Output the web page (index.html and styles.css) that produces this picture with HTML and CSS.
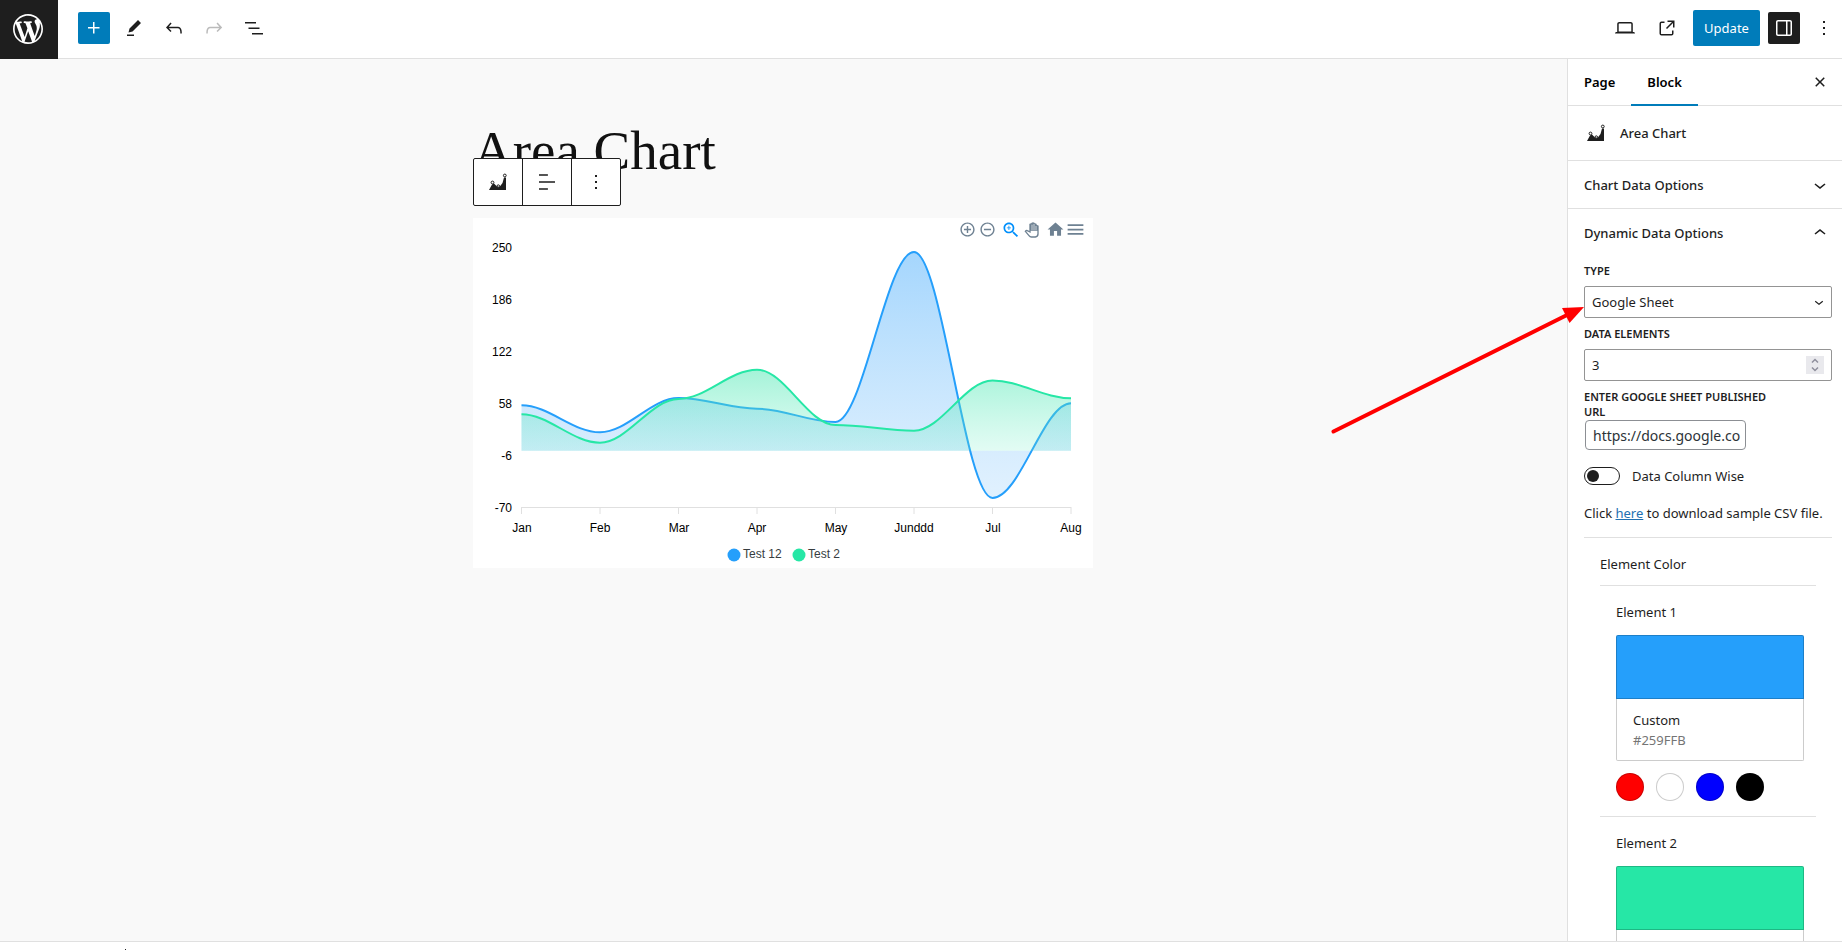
FILE: index.html
```
<!DOCTYPE html>
<html lang="en">

<head>
    <meta charset="UTF-8">
    <meta name="viewport" content="width=device-width, initial-scale=1.0">
    <title>Edit Page - Area Chart</title>
    <link rel="stylesheet" href="styles.css">
</head>

<body>
    <header class="editor-header">
        <a href="#" class="site-logo" aria-label="View Pages">
            <svg viewBox="-2 -2 24 24" width="36" height="36"><path d="M20 10c0-5.51-4.49-10-10-10C4.48 0 0 4.49 0 10c0 5.52 4.48 10 10 10 5.51 0 10-4.48 10-10zM7.78 15.37L4.37 6.22c.55-.02 1.17-.08 1.17-.08.5-.06.44-1.13-.06-1.11 0 0-1.45.11-2.37.11-.18 0-.37 0-.58-.01C4.12 2.69 6.87 1.11 10 1.11c2.33 0 4.45.87 6.05 2.34-.68-.11-1.65.39-1.65 1.58 0 .74.45 1.36.9 2.1.35.61.55 1.36.55 2.46 0 1.49-1.4 5-1.4 5l-3.03-8.37c.54-.02.82-.17.82-.17.5-.05.44-1.25-.06-1.22 0 0-1.44.12-2.38.12-.87 0-2.33-.12-2.33-.12-.5-.03-.56 1.2-.06 1.22l.92.08 1.26 3.41zM17.41 10c.24-.64.74-1.87.43-4.25.7 1.29 1.05 2.71 1.05 4.25 0 3.29-1.73 6.24-4.4 7.78.97-2.59 1.94-5.2 2.92-7.78zM6.1 18.09C3.12 16.65 1.11 13.53 1.11 10c0-1.3.23-2.48.72-3.59C3.25 10.3 4.67 14.2 6.1 18.09zm4.03-6.63l2.58 6.98c-.86.29-1.76.45-2.71.45-.79 0-1.57-.11-2.29-.33.81-2.38 1.62-4.74 2.42-7.1z"/></svg>
        </a>
        <div class="header-tools">
            <button class="icon-btn primary" aria-label="Add block">
                <svg viewBox="0 0 24 24" width="24" height="24"><path d="M11 12.5V17.5H12.5V12.5H17.5V11H12.5V6H11V11H6V12.5H11Z"/></svg>
            </button>
            <button class="icon-btn" aria-label="Tools">
                <svg viewBox="0 0 24 24" width="24" height="24"><path d="m19 7-3-3-8.5 8.5-1 4 4-1L19 7Zm-7 11.5H5V20h7v-1.5Z"/></svg>
            </button>
            <button class="icon-btn" aria-label="Undo">
                <svg viewBox="0 0 24 24" width="24" height="24"><path d="M18.3 11.7c-.6-.6-1.4-.9-2.3-.9H6.7l2.9-3.3-1.1-1-4.5 5L8.5 16l1-1-2.7-2.7H16c.5 0 .9.2 1.3.5 1 1 1 3.4 1 4.5v.3h1.5v-.2c0-1.5 0-4.3-1.5-5.7z"/></svg>
            </button>
            <button class="icon-btn" aria-label="Redo" disabled>
                <svg viewBox="0 0 24 24" width="24" height="24"><path d="M15.6 6.5l-1.1 1 2.9 3.3H8c-.9 0-1.7.3-2.3.9-1.4 1.5-1.4 4.2-1.4 5.6v.2h1.5v-.3c0-1.1 0-3.5 1-4.5.3-.3.7-.5 1.3-.5h9.2L14.5 15l1.1 1.1 4.6-4.6-4.6-5z"/></svg>
            </button>
            <button class="icon-btn" aria-label="Document overview">
                <svg viewBox="0 0 24 24" width="24" height="24"><path d="M3 6h11v1.5H3V6Zm3.5 5.5h11V13h-11v-1.5ZM21 17H10v1.5h11V17Z"/></svg>
            </button>
        </div>
        <div class="header-settings">
            <button class="icon-btn wide" aria-label="Preview">
                <svg viewBox="0 0 24 24" width="24" height="24"><path d="M20.5 16h-.7V8c0-1.1-.9-2-2-2H6.2c-1.1 0-2 .9-2 2v8h-.7c-.8 0-1.5.7-1.5 1.5h20c0-.8-.7-1.5-1.5-1.5zM5.7 8c0-.3.2-.5.5-.5h11.6c.3 0 .5.2.5.5v7.6H5.7V8z"/></svg>
            </button>
            <button class="icon-btn wide" aria-label="View page">
                <svg viewBox="0 0 24 24" width="24" height="24"><path d="M19.5 4.5h-7V6h4.44l-5.97 5.97 1.06 1.06L18 7.06v4.44h1.5v-7Zm-13 1a2 2 0 0 0-2 2v10a2 2 0 0 0 2 2h10a2 2 0 0 0 2-2v-3H17v3a.5.5 0 0 1-.5.5h-10a.5.5 0 0 1-.5-.5v-10a.5.5 0 0 1 .5-.5h3V5.5h-3Z"/></svg>
            </button>
            <button class="update-btn">Update</button>
            <button class="icon-btn pressed" aria-label="Settings">
                <svg viewBox="0 0 24 24" width="24" height="24"><path d="M18 4H6c-1.1 0-2 .9-2 2v12c0 1.1.9 2 2 2h12c1.1 0 2-.9 2-2V6c0-1.1-.9-2-2-2zm-4 14.5H6c-.3 0-.5-.2-.5-.5V6c0-.3.2-.5.5-.5h8v13zm4.5-.5c0 .3-.2.5-.5.5h-2.5v-13H18c.3 0 .5.2.5.5v12z"/></svg>
            </button>
            <button class="icon-btn" aria-label="Options">
                <svg viewBox="0 0 24 24" width="24" height="24"><path d="M13 19h-2v-2h2v2zm0-6h-2v-2h2v2zm0-6h-2V5h2v2z"/></svg>
            </button>
        </div>
    </header>

    <div class="editor-body">
        <main class="canvas">
            <div class="post">
                <h1 class="post-title">Area Chart</h1>

                <div class="chart-block">
                    <div class="block-toolbar">
                        <button aria-label="Area Chart">
                            <svg viewBox="0 0 24 24" width="24" height="24"><path d="M3 20 6 14.5 8 13.5 11.500 17 13.500 17 16.500 13 18 7.500 20 7.500V20Z"/><g class="dot"><circle cx="6.500" cy="12.500" r="1.400"/><circle cx="12.300" cy="16" r="1.200"/><circle cx="18.800" cy="5.500" r="1.400"/></g></svg>
                        </button>
                        <button aria-label="Align">
                            <svg viewBox="0 0 24 24" width="24" height="24"><path d="M4 19.800h8.900v-1.500H4v1.500zm8.900-15.600H4v1.500h8.900V4.200zm-8.900 7v1.500h16v-1.500H4z"/></svg>
                        </button>
                        <button aria-label="Options">
                            <svg viewBox="0 0 24 24" width="24" height="24"><path d="M13 19h-2v-2h2v2zm0-6h-2v-2h2v2zm0-6h-2V5h2v2z"/></svg>
                        </button>
                    </div>

                    <div class="chart-tools">
                        <button aria-label="Zoom in"><svg viewBox="0 0 24 24" width="17" height="17"><path d="M13 7h-2v4H7v2h4v4h2v-4h4v-2h-4V7zm-1-5C6.480 2 2 6.480 2 12s4.480 10 10 10 10-4.480 10-10S17.520 2 12 2zm0 18c-4.410 0-8-3.590-8-8s3.590-8 8-8 8 3.590 8 8-3.590 8-8 8z"/></svg></button>
                        <button aria-label="Zoom out"><svg viewBox="0 0 24 24" width="17" height="17"><path d="M7 11v2h10v-2H7zm5-9C6.480 2 2 6.480 2 12s4.480 10 10 10 10-4.480 10-10S17.520 2 12 2zm0 18c-4.410 0-8-3.590-8-8s3.590-8 8-8 8 3.590 8 8-3.590 8-8 8z"/></svg></button>
                        <button aria-label="Selection zoom" class="active"><svg viewBox="0 0 24 24" width="20" height="20"><path d="M15.500 14h-.79l-.28-.27C15.410 12.590 16 11.110 16 9.500 16 5.910 13.090 3 9.500 3S3 5.910 3 9.500 5.910 16 9.500 16c1.610 0 3.090-.59 4.230-1.570l.27.28v.79l5 4.990L20.490 19l-4.990-5zm-6 0C7.010 14 5 11.990 5 9.500S7.010 5 9.500 5 14 7.010 14 9.500 11.990 14 9.500 14zM12 10h-2v2H9v-2H7V9h2V7h1v2h2v1z"/></svg></button>
                        <button aria-label="Panning"><svg viewBox="0 0 24 24" width="16" height="16"><path class="hand" d="M9 15V3.500q1.500-1 3 0V2q1.500-1.200 3 0v1.500q1.500-1 3 0V6q1.500-1 3 0v12q0 4-4 4.500h-6q-2 0-3.500-2L2 14q1.500-2 3-1Z"/><path d="M9 13V3.500q1.500-1 3 0V2q1.500-1.200 3 0v1.500q1.500-1 3 0V6q1.500-1 3 0v7Z"/><path class="fingers" d="M12 4v8M15 3v9M18 6v6"/></svg></button>
                        <button aria-label="Reset zoom"><svg viewBox="0 0 24 24" width="19" height="19"><path d="M10 20v-6h4v6h5v-8h3L12 3 2 12h3v8z"/></svg></button>
                        <button aria-label="Menu"><svg viewBox="0 0 24 24" width="21" height="21"><path d="M3 18h18v-2H3v2zm0-5h18v-2H3v2zm0-7v2h18V6H3z"/></svg></button>
                    </div>

                    <svg class="chart" viewBox="0 0 620 350" role="img" aria-label="Area chart of Test 12 and Test 2">
                        <defs>
                            <linearGradient id="fillBlue" x1="0" y1="0" x2="0" y2="1">
                                <stop offset="0" stop-color="#74c0fc" stop-opacity=".65"/>
                                <stop offset="1" stop-color="#c3e3fd" stop-opacity=".5"/>
                            </linearGradient>
                            <linearGradient id="fillGreen" x1="0" y1="0" x2="0" y2="1">
                                <stop offset="0" stop-color="#49e7b1" stop-opacity=".5"/>
                                <stop offset="1" stop-color="#70eec6" stop-opacity=".2"/>
                            </linearGradient>
                        </defs>

                        <!-- x axis -->
                        <path class="axis" d="M48.500 289.500H598M48.500 289v7M127 289v7M205.500 289v7M284 289v7M362.500 289v7M441 289v7M519.500 289v7M598 289v7"/>

                        <!-- Test 12 -->
                        <path fill="url(#fillBlue)" d="M48.500 187.300C76 187.300 99.500 214.300 127 214.300S178 180 205.500 180 256.500 190.700 284 190.700 335 204 362.500 204 413.500 34 441 34 492 280 519.500 280 570.500 185.300 598 185.300V232.700H48.500Z"/>
                        <path class="line blue" d="M48.500 187.300C76 187.300 99.500 214.300 127 214.300S178 180 205.500 180 256.500 190.700 284 190.700 335 204 362.500 204 413.500 34 441 34 492 280 519.500 280 570.500 185.300 598 185.300"/>

                        <!-- Test 2 -->
                        <path fill="url(#fillGreen)" d="M48.500 196.300C76 196.300 99.500 224.700 127 224.700S178 181 205.500 181 256.500 151.700 284 151.700 335 207 362.500 207 413.500 212.700 441 212.700 492 162.500 519.500 162.500 570.500 180.200 598 180.200V232.700H48.500Z"/>
                        <path class="line green" d="M48.500 196.300C76 196.300 99.500 224.700 127 224.700S178 181 205.500 181 256.500 151.700 284 151.700 335 207 362.500 207 413.500 212.700 441 212.700 492 162.500 519.500 162.500 570.500 180.200 598 180.200"/>

                        <g class="y-labels">
                            <text x="39" y="34">250</text>
                            <text x="39" y="86">186</text>
                            <text x="39" y="138">122</text>
                            <text x="39" y="190">58</text>
                            <text x="39" y="242">-6</text>
                            <text x="39" y="294">-70</text>
                        </g>
                        <g class="x-labels">
                            <text x="49" y="314">Jan</text>
                            <text x="127" y="314">Feb</text>
                            <text x="206" y="314">Mar</text>
                            <text x="284" y="314">Apr</text>
                            <text x="363" y="314">May</text>
                            <text x="441" y="314">Junddd</text>
                            <text x="520" y="314">Jul</text>
                            <text x="598" y="314">Aug</text>
                        </g>
                        <g class="legend">
                            <circle cx="261" cy="337" r="6.500" fill="#259ffb"/>
                            <text x="270" y="340">Test 12</text>
                            <circle cx="326" cy="337" r="6.500" fill="#26e7a6"/>
                            <text x="335" y="340">Test 2</text>
                        </g>
                    </svg>
                </div>
            </div>
        </main>

        <aside class="sidebar">
            <div class="tabs">
                <button class="tab">Page</button>
                <button class="tab active">Block</button>
                <button class="close-btn" aria-label="Close settings">
                    <svg viewBox="0 0 24 24" width="24" height="24"><path d="M12 13.060l3.712 3.713 1.061-1.060L13.061 12l3.712-3.712-1.060-1.060L12 10.938 8.288 7.227l-1.061 1.060L10.939 12l-3.712 3.712 1.060 1.061L12 13.061z"/></svg>
                </button>
            </div>

            <div class="block-card">
                <svg viewBox="0 0 24 24" width="24" height="24"><path d="M3 20 6 14.5 8 13.5 11.500 17 13.500 17 16.500 13 18 7.500 20 7.500V20Z"/><g class="dot"><circle cx="6.500" cy="12.500" r="1.400"/><circle cx="12.300" cy="16" r="1.200"/><circle cx="18.800" cy="5.500" r="1.400"/></g></svg>
                <h2>Area Chart</h2>
            </div>

            <section class="panel">
                <button class="panel-title">Chart Data Options
                    <svg viewBox="0 0 24 24" width="24" height="24"><path d="M17.500 11.600L12 16l-5.500-4.400.9-1.200L12 14l4.500-3.600 1 1.200z"/></svg>
                </button>
            </section>

            <section class="panel">
                <button class="panel-title">Dynamic Data Options
                    <svg viewBox="0 0 24 24" width="24" height="24"><path d="M6.500 12.400L12 8l5.500 4.400-.9 1.200L12 10l-4.500 3.600-1-1.200z"/></svg>
                </button>
                <div class="panel-body">
                    <div class="field">
                        <label for="type">Type</label>
                        <div class="control">
                            <select id="type">
                                <option>Google Sheet</option>
                            </select>
                            <svg class="select-arrow" viewBox="0 0 24 24" width="18" height="18"><path d="M17.500 11.600L12 16l-5.500-4.400.9-1.200L12 14l4.500-3.600 1 1.200z"/></svg>
                        </div>
                    </div>
                    <div class="field">
                        <label for="elements">Data Elements</label>
                        <div class="control">
                            <input type="number" id="elements" value="3">
                            <svg class="spinner" viewBox="0 0 18 18" width="18" height="18"><path d="M6 6.500 9 3.500l3 3M6 11.500l3 3 3-3"/></svg>
                        </div>
                    </div>
                    <div class="field url-field">
                        <label for="sheetUrl">Enter Google Sheet Published URL</label>
                        <input type="text" id="sheetUrl" value="https://docs.google.co">
                    </div>
                    <div class="toggle-row">
                        <input type="checkbox" id="columnWise" class="toggle">
                        <label for="columnWise">Data Column Wise</label>
                    </div>
                    <p class="help">Click <a href="#">here</a> to download sample CSV file.</p>

                    <div class="color-panel">
                        <h3>Element Color</h3>
                        <div class="element">
                            <h4>Element 1</h4>
                            <div class="color-card">
                                <button class="swatch blue" aria-label="Custom color picker"></button>
                                <div class="color-info">
                                    <span>Custom</span>
                                    <span class="hex">#259FFB</span>
                                </div>
                            </div>
                            <div class="palette">
                                <button class="red" aria-label="Red"></button>
                                <button class="white" aria-label="White"></button>
                                <button class="navy" aria-label="Blue"></button>
                                <button class="black" aria-label="Black"></button>
                            </div>
                        </div>
                        <div class="element">
                            <h4>Element 2</h4>
                            <div class="color-card">
                                <button class="swatch green" aria-label="Custom color picker"></button>
                                <div class="color-info"></div>
                            </div>
                        </div>
                    </div>
                </div>
            </section>
        </aside>

        <!-- pointer to the Type field -->
        <svg class="pointer" viewBox="0 0 256 130" width="256" height="130"><path class="shaft" d="M3.500 125.500 238 8.500"/><path d="M254 1 232 2 239.500 17Z"/></svg>
    </div>

    <footer class="editor-footer"><span class="crumb"></span></footer>
</body>

</html>
```
FILE: styles.css
```
* {
    margin: 0;
    padding: 0;
    box-sizing: border-box;
}

body {
    display: flex;
    flex-direction: column;
    height: 100vh;
    overflow: hidden;
    font-family: "Noto Sans", sans-serif;
    font-size: 13px;
    color: #1e1e1e;
    background-color: #fff;
}

button,
input,
select {
    font-family: inherit;
    font-size: 13px;
    color: inherit;
}

button {
    background: none;
    border: none;
    cursor: pointer;
}

svg {
    display: block;
    fill: currentColor;
}

/* Header */
.editor-header {
    display: flex;
    align-items: center;
    flex-shrink: 0;
    height: 59px;
    padding-right: 2px;
    border-bottom: 1px solid #e0e0e0;
}

.site-logo {
    display: flex;
    align-items: center;
    justify-content: center;
    width: 58px;
    height: 59px;
    padding-right: 2px;
    background-color: #1e1e1e;
    color: #fff;
}

.header-tools,
.header-settings {
    display: flex;
    align-items: center;
    gap: 8px;
    height: 56px;
    align-self: flex-start;
}

.header-tools {
    margin-left: 20px;
}

.header-settings {
    margin-left: auto;
}

.icon-btn {
    display: flex;
    align-items: center;
    justify-content: center;
    width: 32px;
    height: 32px;
    border-radius: 2px;
}

.icon-btn.wide {
    width: 36px;
    margin-right: -2px;
}

.icon-btn.wide + .icon-btn.wide {
    margin-right: 0;
}

.icon-btn.primary {
    background-color: #007cba;
    color: #fff;
}

.icon-btn.pressed {
    background-color: #1e1e1e;
    color: #fff;
}

.icon-btn:disabled {
    color: #bbb;
}

.update-btn {
    height: 36px;
    width: 67px;
    background-color: #007cba;
    color: #fff;
    border-radius: 2px;
}

/* Canvas */
.editor-body {
    position: relative;
    display: flex;
    flex: 1;
    min-height: 0;
}

.canvas {
    flex: 1;
    padding-right: 1px;
    background-color: #f9f9f9;
}

.post {
    width: 620px;
    margin: 0 auto;
    padding-top: 60px;
}

.post-title {
    font-family: "Liberation Serif", serif;
    font-size: 55px;
    font-weight: normal;
    line-height: 64px;
    color: #111;
}

.chart-block {
    position: relative;
    margin-top: 35px;
    background-color: #fff;
}

.block-toolbar {
    position: absolute;
    top: -60px;
    left: 0;
    display: flex;
    height: 48px;
    background-color: #fff;
    border: 1px solid #1e1e1e;
    border-radius: 2px;
}

.block-toolbar button {
    display: flex;
    align-items: center;
    justify-content: center;
    width: 48px;
}

.block-toolbar button + button {
    width: 49px;
    border-left: 1px solid #1e1e1e;
}

.dot {
    fill: #fff;
    stroke: currentColor;
}

.chart-tools {
    position: absolute;
    top: 0;
    right: 7px;
    display: flex;
    align-items: center;
    gap: 3px;
    height: 23px;
}

.chart-tools button {
    color: #6e8192;
}

.chart-tools button.active {
    color: #008ffb;
}

.chart-tools button:nth-child(2) {
    margin-right: 2px;
}

.chart-tools button:nth-child(4) {
    margin-right: 3px;
}

.chart-tools button:nth-child(5) {
    margin-right: -3px;
}

.hand {
    fill: #fff;
    stroke: currentColor;
    stroke-width: 2;
}

.fingers {
    stroke: #fff;
    stroke-width: 1;
}

.chart {
    width: 100%;
    font-family: "Liberation Sans", sans-serif;
    font-size: 12px;
}

.axis {
    fill: none;
    stroke: #e0e0e0;
}

.line {
    fill: none;
    stroke-width: 2;
}

.line.blue {
    stroke: #259ffb;
}

.line.green {
    stroke: #26e7a6;
}

.y-labels {
    fill: #000;
    text-anchor: end;
}

.x-labels {
    fill: #000;
    text-anchor: middle;
}

.legend {
    fill: #373d3f;
}

/* Sidebar */
.sidebar {
    width: 275px;
    flex-shrink: 0;
    overflow: hidden;
    background-color: #fff;
    border-left: 1px solid #e0e0e0;
}

.tabs {
    display: flex;
    height: 47px;
    border-bottom: 1px solid #e0e0e0;
}

.tab {
    height: 47px;
    padding: 0 16px;
    font-weight: 600;
    color: #000;
    border-bottom: 2px solid transparent;
}

.tab.active {
    border-bottom-color: #007cba;
}

.close-btn {
    margin-left: auto;
    padding-right: 10px;
}

.block-card {
    display: flex;
    align-items: center;
    gap: 12px;
    height: 55px;
    padding: 0 16px;
    border-bottom: 1px solid #e0e0e0;
}

.block-card h2 {
    font-size: 13px;
    font-weight: 500;
}

.panel + .panel {
    border-top: 1px solid #e0e0e0;
}

.panel-title {
    display: flex;
    align-items: center;
    justify-content: space-between;
    width: 100%;
    height: 47px;
    padding: 0 10px 0 16px;
    font-weight: 500;
}

.panel-body {
    padding: 7px 10px 16px 16px;
}

.field {
    margin-bottom: 8px;
}

.field label {
    display: block;
    margin-bottom: 8px;
    font-size: 11px;
    font-weight: 600;
    line-height: 15px;
    text-transform: uppercase;
}

.control {
    position: relative;
}

.control select,
.control input {
    display: block;
    width: 100%;
    height: 32px;
    padding: 0 7px;
    background-color: #fff;
    border: 1px solid #949494;
    border-radius: 2px;
    appearance: none;
    -moz-appearance: textfield;
}

.control input::-webkit-inner-spin-button {
    appearance: none;
}

.select-arrow {
    position: absolute;
    top: 7px;
    right: 4px;
    pointer-events: none;
}

.spinner {
    position: absolute;
    top: 7px;
    right: 8px;
    background-color: #e9e9ed;
    fill: none;
    stroke: #8f8f9d;
    stroke-width: 1.5;
    pointer-events: none;
}

.url-field label {
    width: 200px;
    margin-bottom: 1px;
}

.url-field input {
    display: block;
    width: 161px;
    height: 30px;
    margin-left: 1px;
    padding: 0 0 0 7px;
    font-size: 14px;
    color: #2c3338;
    border: 1px solid #8c8f94;
    border-radius: 4px;
}

.toggle-row {
    display: flex;
    align-items: center;
    gap: 12px;
    height: 18px;
    margin-top: 17px;
}

.toggle {
    display: flex;
    align-items: center;
    width: 36px;
    height: 18px;
    padding-left: 2px;
    border: 1px solid #1e1e1e;
    border-radius: 9px;
    appearance: none;
}

.toggle::before {
    content: "";
    width: 12px;
    height: 12px;
    background-color: #1e1e1e;
    border-radius: 50%;
}

.help {
    margin-top: 18px;
    line-height: 20px;
    white-space: nowrap;
}

.help a {
    color: #2271b1;
}

.color-panel {
    margin-top: 14px;
    padding: 0 16px;
    border-top: 1px solid #e0e0e0;
}

.color-panel h3,
.color-panel h4 {
    font-size: 13px;
    font-weight: normal;
    line-height: 20px;
}

.color-panel h3 {
    padding: 16px 0 11px;
}

.element {
    padding: 0 12px 15px 16px;
    border-top: 1px solid #e0e0e0;
}

.element h4 {
    padding: 16px 0 13px;
}

.swatch {
    display: block;
    width: 100%;
    height: 64px;
    border: 1px solid rgba(0, 0, 0, 0.2);
    border-radius: 2px 2px 0 0;
}

.swatch.blue {
    background-color: #259ffb;
}

.swatch.green {
    background-color: #26e7a6;
}

.color-info {
    display: flex;
    flex-direction: column;
    height: 62px;
    padding: 11px 16px;
    line-height: 20px;
    border: 1px solid #ccc;
    border-top: none;
    border-radius: 0 0 2px 2px;
}

.hex {
    color: #757575;
}

.palette {
    display: flex;
    gap: 12px;
    margin-top: 12px;
}

.palette button {
    width: 28px;
    height: 28px;
    border-radius: 50%;
    border: 1px solid rgba(0, 0, 0, 0.2);
}

.palette .red {
    background-color: #f00;
}

.palette .white {
    background-color: #fff;
}

.palette .navy {
    background-color: #00f;
}

.palette .black {
    background-color: #000;
}

.pointer {
    position: absolute;
    top: 247px;
    right: 256px;
    fill: #f00;
    pointer-events: none;
}

.shaft {
    stroke: #f00;
    stroke-width: 4;
    stroke-linecap: round;
}

/* Footer */
.editor-footer {
    display: flex;
    align-items: flex-end;
    flex-shrink: 0;
    height: 9px;
    padding-left: 125px;
    border-top: 1px solid #e0e0e0;
}

.crumb {
    width: 1px;
    height: 1px;
    background-color: #1e1e1e;
}
```
